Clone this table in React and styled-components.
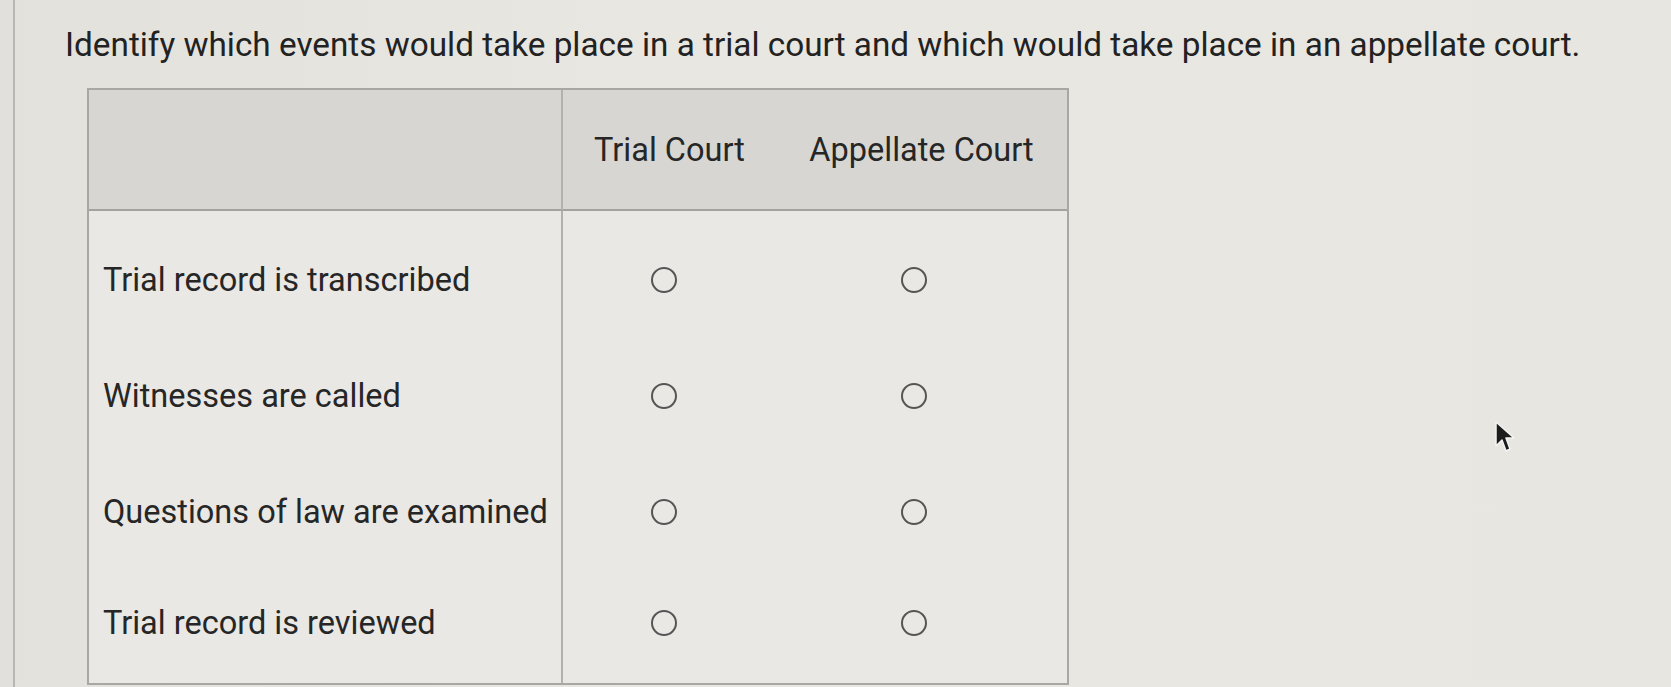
import React from 'react';
import styled, { createGlobalStyle } from 'styled-components';

const Global = createGlobalStyle`
  html, body { margin: 0; padding: 0; }
  body {
    background: #e6e4df;
    font-family: Roboto, 'Liberation Sans', sans-serif;
    color: #262626;
  }
`

const Screen = styled.div`
  position: relative;
  width: 1671px;
  height: 687px;
  overflow: hidden;
  display: flex;
  background: linear-gradient(90deg, #e3e1dc 0%, #e9e7e2 40%, #e8e6e1 100%);
`

const Bezel = styled.div`
  width: 13px;
  flex: none;
  background: #e1e0dc;
  border-right: 2px solid #b8b7b3;
`

const Content = styled.div`
  flex: 1;
  padding: 25px 0 0 50px;
`

const Title = styled.h1`
  margin: 0 0 23px 0;
  font-size: 33.3px;
  line-height: 40px;
  font-weight: 400;
  color: #222;
`

const Table = styled.div`
  margin-left: 22px;
  width: 978px;
  display: grid;
  grid-template-columns: 474px 213px 1fr;
  border: 2px solid #a8a7a3;
  background: #e9e8e4;
`

const HeadCell = styled.div`
  height: 119px;
  background: #d7d6d2;
  border-bottom: 2px solid #a3a29e;
  border-right: ${p => (p.$divider ? '2px solid #b2b1ad' : 'none')};
  display: flex;
  align-items: center;
  justify-content: center;
  font-size: 32.5px;
  color: #262626;
`

const Cell = styled.div`
  box-sizing: border-box;
  height: ${p => (p.$last ? 124 : 116)}px;
  padding-top: ${p => (p.$last ? 4 : 22)}px;
  display: flex;
  align-items: center;
`

const LabelCell = styled(Cell)`
  padding-left: 14px;
  border-right: 2px solid #b2b1ad;
  font-size: 32.5px;
  line-height: 40px;
  color: #262626;
`

const RadioCell = styled(Cell)`
  justify-content: center;
`

const Radio = styled.span`
  box-sizing: border-box;
  width: 26px;
  height: 26px;
  border: 2.5px solid #555;
  border-radius: 50%;
  margin-left: ${p => p.$shift || 0}px;
`

const Cursor = styled.svg`
  position: absolute;
  left: 1494px;
  top: 420px;
`

const rows = [
  'Trial record is transcribed',
  'Witnesses are called',
  'Questions of law are examined',
  'Trial record is reviewed',
];

export default function App() {
  return (
    <>
      <Global />
      <Screen>
        <Bezel />
        <Content>
          <Title>Identify which events would take place in a trial court and which would take place in an appellate court.</Title>
          <Table>
            <HeadCell $divider />
            <HeadCell>Trial Court</HeadCell>
            <HeadCell>Appellate Court</HeadCell>
            {rows.map((r, i) => {
              const last = i === rows.length - 1;
              return (
                <React.Fragment key={r}>
                  <LabelCell $last={last}>{r}</LabelCell>
                  <RadioCell $last={last}><Radio $shift={-12} /></RadioCell>
                  <RadioCell $last={last}><Radio $shift={-16} /></RadioCell>
                </React.Fragment>
              );
            })}
          </Table>
        </Content>
        <Cursor width="22" height="34" viewBox="0 0 22 34">
          <path d="M2 2 L2 26 L8 20 L12 31 L16 29 L12 18 L20 18 Z" fill="#1c1c1c" stroke="#f4f4f4" strokeWidth="1.5" strokeLinejoin="round" />
        </Cursor>
      </Screen>
    </>
  );
}
